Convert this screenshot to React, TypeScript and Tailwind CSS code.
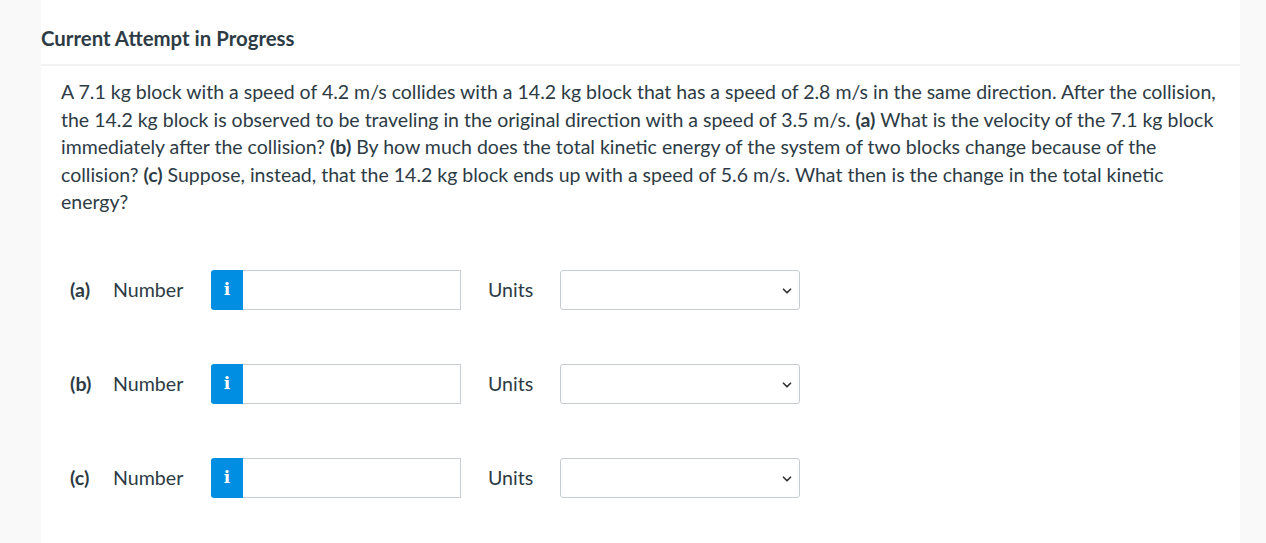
import { ChevronDown } from "lucide-react";

const parts = ["a", "b", "c"];

function AnswerRow({ part }: { part: string }) {
  return (
    <div className="flex items-center h-[40px] pl-[9px] text-[19.6px]">
      <span className="font-bold w-[43px]">({part})</span>
      <span className="w-[98px]">Number</span>
      <div className="flex h-[40px]">
        <button className="w-[32px] h-[40px] bg-[#008ee2] rounded-l-[3px] flex items-center justify-center text-white font-bold text-[17px] [font-family:'DejaVu_Serif',serif]">
          i
        </button>
        <input
          type="text"
          className="w-[218px] h-[40px] border border-[#c7cdd1] border-l-0 bg-white outline-none"
        />
      </div>
      <span className="ml-[27px] w-[72px]">Units</span>
      <div className="relative w-[240px] h-[40px] border border-[#c7cdd1] rounded-[3px] bg-white">
        <ChevronDown className="absolute right-[5px] top-[13px] w-[14px] h-[14px] text-[#333]" strokeWidth={3} />
      </div>
    </div>
  );
}

export default function App() {
  return (
    <div className="min-h-[543px] bg-[#f9f9f9] pl-[41px] pr-[26px] [font-family:Lato,'Liberation_Sans',sans-serif] text-[#2d3b45]">
      <div className="bg-white min-h-[543px]">
        <div className="h-[66px] border-b-2 border-[#f2f2f2] flex items-end pb-[16px]">
          <h2 className="text-[20.4px] font-bold leading-none">Current Attempt in Progress</h2>
        </div>
        <div className="px-[20px] pt-[12px] text-[19.5px]">
          <p className="leading-[27.5px]">
            A 7.1 kg block with a speed of 4.2 m/s collides with a 14.2 kg block that has a speed of 2.8 m/s in the same direction. After the collision, the 14.2 kg block is observed to be traveling in the original direction with a speed of 3.5 m/s. <b>(a)</b> What is the velocity of the 7.1 kg block immediately after the collision? <b>(b)</b> By how much does the total kinetic energy of the system of two blocks change because of the collision? <b>(c)</b> Suppose, instead, that the 14.2 kg block ends up with a speed of 5.6 m/s. What then is the change in the total kinetic energy?
          </p>
          <div className="mt-[54px] flex flex-col gap-[54px]">
            {parts.map((p) => (
              <AnswerRow key={p} part={p} />
            ))}
          </div>
        </div>
      </div>
    </div>
  );
}
